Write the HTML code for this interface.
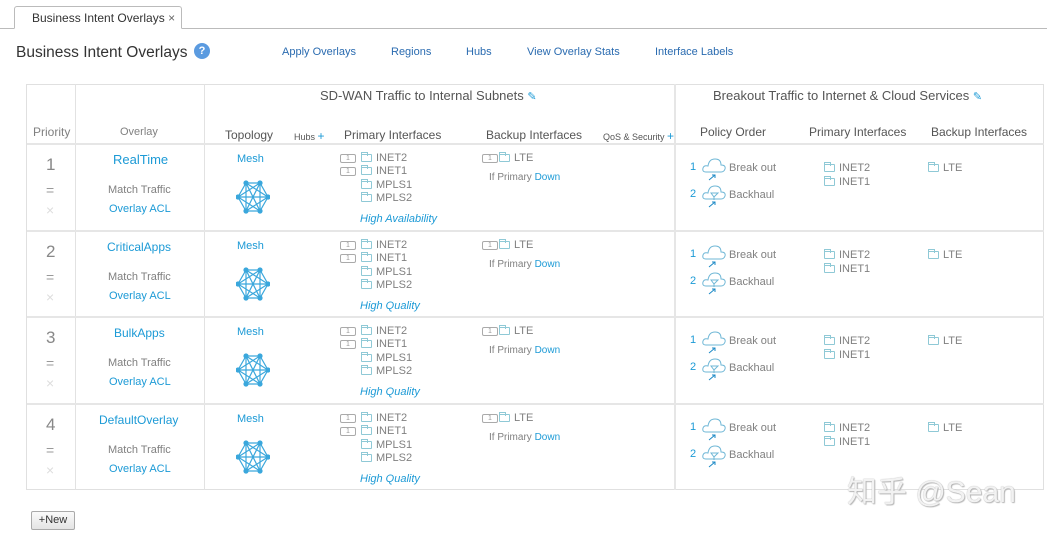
<!DOCTYPE html>
<html><head><meta charset="utf-8">
<style>
*{margin:0;padding:0;box-sizing:border-box}
body{width:1047px;height:535px;background:#fff;font-family:"Liberation Sans",Tahoma,sans-serif;position:relative;overflow:hidden;color:#666}
.a{position:absolute;white-space:nowrap;line-height:14px}
.l{color:#1c9ad6}
.g{color:#808080}
.s{font-size:11px}
.row{position:absolute;left:27px;width:1017px;height:84px;border-top:2px solid #e6e6e6}
.vl{position:absolute;top:0;bottom:0;width:1px;background:#e2e2e2}
.fd{display:inline-block;width:11px;height:8px;border:1px solid #8fc9d6;border-radius:1px;vertical-align:-1px;margin-right:4px;position:relative}
.fd:before{content:"";position:absolute;left:-1px;top:-3px;width:5px;height:3px;border:1px solid #8fc9d6;border-bottom:none}
.bx{position:absolute;width:16px;height:9px;border:1px solid #aaa;border-radius:2px;font-size:7px;line-height:7px;text-align:center;color:#999}
.it{font-style:italic}
</style></head><body>
<div style="position:absolute;left:0;top:28px;width:1047px;height:1px;background:#bbb"></div>
<div style="position:absolute;left:14px;top:6px;width:168px;height:23px;border:1px solid #bbb;border-bottom:1px solid #fff;border-radius:3px 3px 0 0;background:#fff"></div>
<div class="a" style="left:32px;top:11px;font-size:12px;color:#333">Business Intent Overlays <span style="color:#666">×</span></div>
<div class="a" style="left:16px;top:44px;font-size:15.5px;line-height:18px;color:#333">Business Intent Overlays</div>
<div style="position:absolute;left:194px;top:43px;width:16px;height:16px;border-radius:50%;background:#5b9be0;color:#fff;font-size:11px;font-weight:bold;text-align:center;line-height:16px">?</div>
<div class="a l" style="left:282px;top:45px;font-size:11px;color:#2a6bb0">Apply Overlays</div>
<div class="a l" style="left:391px;top:45px;font-size:11px;color:#2a6bb0">Regions</div>
<div class="a l" style="left:466px;top:45px;font-size:11px;color:#2a6bb0">Hubs</div>
<div class="a l" style="left:527px;top:45px;font-size:11px;color:#2a6bb0">View Overlay Stats</div>
<div class="a l" style="left:655px;top:45px;font-size:11px;color:#2a6bb0">Interface Labels</div>

<div style="position:absolute;left:26px;top:84px;width:1018px;height:406px;border:1px solid #e0e0e0"></div>
<div class="vl" style="left:75px;top:84px;height:406px"></div>
<div class="vl" style="left:204px;top:84px;height:406px"></div>
<div class="vl" style="left:674px;top:84px;height:406px;width:2px;background:#e6e6e6"></div>
<div class="a" style="left:320px;top:89px;font-size:13px;color:#555">SD-WAN Traffic to Internal Subnets <span class="l" style="font-size:11px">✎</span></div>
<div class="a" style="left:713px;top:89px;font-size:13px;color:#555">Breakout Traffic to Internet &amp; Cloud Services <span class="l" style="font-size:11px">✎</span></div>
<div class="a g" style="left:33px;top:125px;font-size:12px">Priority</div>
<div class="a g" style="left:120px;top:125px;font-size:11px">Overlay</div>
<div class="a" style="left:225px;top:128px;font-size:12px;color:#555">Topology</div>
<div class="a" style="left:294px;top:129px;font-size:9px;color:#555">Hubs <span class="l" style="font-size:12px">+</span></div>
<div class="a" style="left:344px;top:128px;font-size:12px;color:#555">Primary Interfaces</div>
<div class="a" style="left:486px;top:128px;font-size:12px;color:#555">Backup Interfaces</div>
<div class="a" style="left:603px;top:129px;font-size:9px;color:#555">QoS &amp; Security <span class="l" style="font-size:12px">+</span></div>
<div class="a" style="left:700px;top:125px;font-size:12px;color:#555">Policy Order</div>
<div class="a" style="left:809px;top:125px;font-size:12px;color:#555">Primary Interfaces</div>
<div class="a" style="left:931px;top:125px;font-size:12px;color:#555">Backup Interfaces</div>

<svg width="0" height="0" style="position:absolute"><defs>
<g id="mesh" stroke="#3aa7dc" stroke-width="1.2" fill="none">
<path d="M8,0 L22,0 L30,14 L22,28 L8,28 L0,14 Z M8,0 L22,28 M22,0 L8,28 M0,14 L30,14 M8,0 L30,14 M8,0 L8,28 M22,0 L22,28 M22,0 L0,14 M0,14 L22,28 M30,14 L8,28"/>
<g fill="#3aa7dc" stroke="none"><circle cx="8" cy="0" r="2.6"/><circle cx="22" cy="0" r="2.6"/><circle cx="30" cy="14" r="2.6"/><circle cx="22" cy="28" r="2.6"/><circle cx="8" cy="28" r="2.6"/><circle cx="0" cy="14" r="2.6"/></g>
</g>
<g id="cl" fill="none" stroke="#6fb7d6" stroke-width="1"><path d="M4,16 Q0,16 1,12 Q2,9 6,10 Q7,3 13,3 Q19,3 19,9 Q24,9 23,13 Q22,16 19,16 Z"/><path d="M7,24 L13,19 M10,19 L13,19 L13,22" stroke="#1c8ac6"/></g>
<g id="cl2" fill="none" stroke="#6fb7d6" stroke-width="1"><path d="M4,16 Q0,16 1,12 Q2,9 6,10 Q7,3 13,3 Q19,3 19,9 Q24,9 23,13 Q22,16 19,16 Z M9,10 L16,10 L12,14 Z M12,14 L12,17"/><path d="M7,24 L13,19 M10,19 L13,19 L13,22" stroke="#1c8ac6"/></g>
</defs></svg>

<div class="row" style="top:143px">
<div class="a" style="left:19px;top:11px;font-size:17px;line-height:18px;color:#888">1</div>
<div class="a" style="left:19px;top:38px;font-size:14px;color:#999">=</div>
<div class="a" style="left:19px;top:58px;font-size:14px;color:#ddd">×</div>
<div class="a l" style="left:86px;top:8px;font-size:13px">RealTime</div>
<div class="a g" style="left:81px;top:38px;font-size:11px">Match Traffic</div>
<div class="a l" style="left:82px;top:57px;font-size:11px">Overlay ACL</div>
<div class="a l" style="left:210px;top:7px;font-size:11px">Mesh</div>
<svg class="a" style="left:209px;top:35px" width="34" height="34" viewBox="-2 -2 34 32"><use href="#mesh"/></svg>
<div class="bx" style="left:313px;top:9px">1</div><div class="bx" style="left:313px;top:22px">1</div>
<div class="a g s" style="left:334px;top:6px"><span class="fd"></span>INET2</div>
<div class="a g s" style="left:334px;top:19px"><span class="fd"></span>INET1</div>
<div class="a g s" style="left:334px;top:33px"><span class="fd"></span>MPLS1</div>
<div class="a g s" style="left:334px;top:46px"><span class="fd"></span>MPLS2</div>
<div class="a l it s" style="left:333px;top:67px">High Availability</div>
<div class="bx" style="left:455px;top:9px">1</div>
<div class="a g s" style="left:472px;top:6px"><span class="fd"></span>LTE</div>
<div class="a g" style="left:462px;top:26px;font-size:10px">If Primary <span class="l">Down</span></div>
<div class="a l s" style="left:663px;top:15px">1</div>
<svg class="a" style="left:675px;top:11px" width="26" height="26"><use href="#cl"/></svg>
<div class="a g s" style="left:702px;top:16px">Break out</div>
<div class="a l s" style="left:663px;top:42px">2</div>
<svg class="a" style="left:675px;top:38px" width="26" height="26"><use href="#cl2"/></svg>
<div class="a g s" style="left:702px;top:43px">Backhaul</div>
<div class="a g s" style="left:797px;top:16px"><span class="fd"></span>INET2</div>
<div class="a g s" style="left:797px;top:30px"><span class="fd"></span>INET1</div>
<div class="a g s" style="left:901px;top:16px"><span class="fd"></span>LTE</div>
</div>

<div class="row" style="top:230px">
<div class="a" style="left:19px;top:11px;font-size:17px;line-height:18px;color:#888">2</div>
<div class="a" style="left:19px;top:38px;font-size:14px;color:#999">=</div>
<div class="a" style="left:19px;top:58px;font-size:14px;color:#ddd">×</div>
<div class="a l" style="left:80px;top:8px;font-size:12px">CriticalApps</div>
<div class="a g" style="left:81px;top:38px;font-size:11px">Match Traffic</div>
<div class="a l" style="left:82px;top:57px;font-size:11px">Overlay ACL</div>
<div class="a l" style="left:210px;top:7px;font-size:11px">Mesh</div>
<svg class="a" style="left:209px;top:35px" width="34" height="34" viewBox="-2 -2 34 32"><use href="#mesh"/></svg>
<div class="bx" style="left:313px;top:9px">1</div><div class="bx" style="left:313px;top:22px">1</div>
<div class="a g s" style="left:334px;top:6px"><span class="fd"></span>INET2</div>
<div class="a g s" style="left:334px;top:19px"><span class="fd"></span>INET1</div>
<div class="a g s" style="left:334px;top:33px"><span class="fd"></span>MPLS1</div>
<div class="a g s" style="left:334px;top:46px"><span class="fd"></span>MPLS2</div>
<div class="a l it s" style="left:333px;top:67px">High Quality</div>
<div class="bx" style="left:455px;top:9px">1</div>
<div class="a g s" style="left:472px;top:6px"><span class="fd"></span>LTE</div>
<div class="a g" style="left:462px;top:26px;font-size:10px">If Primary <span class="l">Down</span></div>
<div class="a l s" style="left:663px;top:15px">1</div>
<svg class="a" style="left:675px;top:11px" width="26" height="26"><use href="#cl"/></svg>
<div class="a g s" style="left:702px;top:16px">Break out</div>
<div class="a l s" style="left:663px;top:42px">2</div>
<svg class="a" style="left:675px;top:38px" width="26" height="26"><use href="#cl2"/></svg>
<div class="a g s" style="left:702px;top:43px">Backhaul</div>
<div class="a g s" style="left:797px;top:16px"><span class="fd"></span>INET2</div>
<div class="a g s" style="left:797px;top:30px"><span class="fd"></span>INET1</div>
<div class="a g s" style="left:901px;top:16px"><span class="fd"></span>LTE</div>
</div>

<div class="row" style="top:316px">
<div class="a" style="left:19px;top:11px;font-size:17px;line-height:18px;color:#888">3</div>
<div class="a" style="left:19px;top:38px;font-size:14px;color:#999">=</div>
<div class="a" style="left:19px;top:58px;font-size:14px;color:#ddd">×</div>
<div class="a l" style="left:87px;top:8px;font-size:12px">BulkApps</div>
<div class="a g" style="left:81px;top:38px;font-size:11px">Match Traffic</div>
<div class="a l" style="left:82px;top:57px;font-size:11px">Overlay ACL</div>
<div class="a l" style="left:210px;top:7px;font-size:11px">Mesh</div>
<svg class="a" style="left:209px;top:35px" width="34" height="34" viewBox="-2 -2 34 32"><use href="#mesh"/></svg>
<div class="bx" style="left:313px;top:9px">1</div><div class="bx" style="left:313px;top:22px">1</div>
<div class="a g s" style="left:334px;top:6px"><span class="fd"></span>INET2</div>
<div class="a g s" style="left:334px;top:19px"><span class="fd"></span>INET1</div>
<div class="a g s" style="left:334px;top:33px"><span class="fd"></span>MPLS1</div>
<div class="a g s" style="left:334px;top:46px"><span class="fd"></span>MPLS2</div>
<div class="a l it s" style="left:333px;top:67px">High Quality</div>
<div class="bx" style="left:455px;top:9px">1</div>
<div class="a g s" style="left:472px;top:6px"><span class="fd"></span>LTE</div>
<div class="a g" style="left:462px;top:26px;font-size:10px">If Primary <span class="l">Down</span></div>
<div class="a l s" style="left:663px;top:15px">1</div>
<svg class="a" style="left:675px;top:11px" width="26" height="26"><use href="#cl"/></svg>
<div class="a g s" style="left:702px;top:16px">Break out</div>
<div class="a l s" style="left:663px;top:42px">2</div>
<svg class="a" style="left:675px;top:38px" width="26" height="26"><use href="#cl2"/></svg>
<div class="a g s" style="left:702px;top:43px">Backhaul</div>
<div class="a g s" style="left:797px;top:16px"><span class="fd"></span>INET2</div>
<div class="a g s" style="left:797px;top:30px"><span class="fd"></span>INET1</div>
<div class="a g s" style="left:901px;top:16px"><span class="fd"></span>LTE</div>
</div>

<div class="row" style="top:403px">
<div class="a" style="left:19px;top:11px;font-size:17px;line-height:18px;color:#888">4</div>
<div class="a" style="left:19px;top:38px;font-size:14px;color:#999">=</div>
<div class="a" style="left:19px;top:58px;font-size:14px;color:#ddd">×</div>
<div class="a l" style="left:72px;top:8px;font-size:12px">DefaultOverlay</div>
<div class="a g" style="left:81px;top:38px;font-size:11px">Match Traffic</div>
<div class="a l" style="left:82px;top:57px;font-size:11px">Overlay ACL</div>
<div class="a l" style="left:210px;top:7px;font-size:11px">Mesh</div>
<svg class="a" style="left:209px;top:35px" width="34" height="34" viewBox="-2 -2 34 32"><use href="#mesh"/></svg>
<div class="bx" style="left:313px;top:9px">1</div><div class="bx" style="left:313px;top:22px">1</div>
<div class="a g s" style="left:334px;top:6px"><span class="fd"></span>INET2</div>
<div class="a g s" style="left:334px;top:19px"><span class="fd"></span>INET1</div>
<div class="a g s" style="left:334px;top:33px"><span class="fd"></span>MPLS1</div>
<div class="a g s" style="left:334px;top:46px"><span class="fd"></span>MPLS2</div>
<div class="a l it s" style="left:333px;top:67px">High Quality</div>
<div class="bx" style="left:455px;top:9px">1</div>
<div class="a g s" style="left:472px;top:6px"><span class="fd"></span>LTE</div>
<div class="a g" style="left:462px;top:26px;font-size:10px">If Primary <span class="l">Down</span></div>
<div class="a l s" style="left:663px;top:15px">1</div>
<svg class="a" style="left:675px;top:11px" width="26" height="26"><use href="#cl"/></svg>
<div class="a g s" style="left:702px;top:16px">Break out</div>
<div class="a l s" style="left:663px;top:42px">2</div>
<svg class="a" style="left:675px;top:38px" width="26" height="26"><use href="#cl2"/></svg>
<div class="a g s" style="left:702px;top:43px">Backhaul</div>
<div class="a g s" style="left:797px;top:16px"><span class="fd"></span>INET2</div>
<div class="a g s" style="left:797px;top:30px"><span class="fd"></span>INET1</div>
<div class="a g s" style="left:901px;top:16px"><span class="fd"></span>LTE</div>
</div>

<div style="position:absolute;left:31px;top:511px;width:44px;height:19px;border:1px solid #aaa;border-radius:2px;background:linear-gradient(#fafafa,#e4e4e4);font-size:11px;line-height:17px;text-align:center;color:#333">+New</div>
<div class="a" style="left:847px;top:476px;font-size:30px;line-height:34px;color:#f2f2f2;font-family:'Liberation Sans','Noto Sans CJK SC',sans-serif;text-shadow:0 0 1px #999,1px 1px 1px #bbb">知乎 @Sean</div>
</body></html>
